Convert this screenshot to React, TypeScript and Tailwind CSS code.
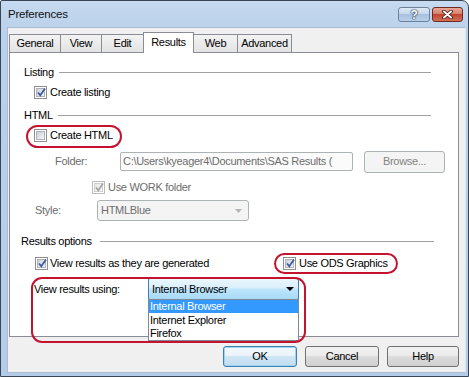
import React from "react";

function Check({ checked, disabled }: { checked?: boolean; disabled?: boolean }) {
  return (
    <span
      className={
        "w-[13px] h-[13px] shrink-0 border flex p-px bg-white " +
        (disabled ? "border-[#bcbcbc]" : "border-[#8e8f8f]")
      }
    >
      <span
        className={
          "flex-1 border relative " +
          (disabled
            ? "border-[#d0d0d0] bg-[linear-gradient(135deg,#e6e6e6,#fafafa)]"
            : "border-[#aeb3b9] bg-[linear-gradient(135deg,#cbcfd5,#f6f6f6)]")
        }
      >
        {checked && (
          <svg className="absolute left-[-1px] top-[-2px]" width="11" height="11" viewBox="0 0 11 11">
            <path
              d="M2 5.5 L4.3 8.3 L9 1.5"
              fill="none"
              stroke={disabled ? "#a3a3a3" : "#3b5aa0"}
              strokeWidth="1.7"
            />
          </svg>
        )}
      </span>
    </span>
  );
}

function Tab({ label, w, selected }: { label: string; w: number; selected?: boolean }) {
  return (
    <div
      style={{ width: w }}
      className={
        "-ml-px flex items-center justify-center border border-b-0 border-[#898c95] shrink-0 " +
        (selected
          ? "h-[21px] -mb-px bg-white relative z-10 pb-[2px]"
          : "h-[18px] bg-[linear-gradient(#f3f3f3,#e3e3e3)]")
      }
    >
      {label}
    </div>
  );
}

function Button({ label, w, def }: { label: string; w: number; def?: boolean }) {
  return (
    <div
      style={{ width: w }}
      className={
        "h-[21px] rounded-[3px] border flex items-center justify-center text-black " +
        (def
          ? "border-[#3c7fb1] bg-[linear-gradient(#f2f9fd_0%,#eaf3f9_45%,#cfe6f4_50%,#c1ddf0_100%)] shadow-[inset_0_0_0_1px_#9ed4ef]"
          : "border-[#707070] bg-[linear-gradient(#f2f2f2_0%,#ebebeb_45%,#dddddd_50%,#cfcfcf_100%)]")
      }
    >
      {label}
    </div>
  );
}

function GroupHeader({ label, pl, gap, pr }: { label: string; pl: number; gap: number; pr: number }) {
  return (
    <div className="h-[16px] flex items-center" style={{ paddingLeft: pl, paddingRight: pr }}>
      <span className="text-black">{label}</span>
      <div className="flex-1 h-px bg-[#a0a0a0]" style={{ marginLeft: gap }} />
    </div>
  );
}

export default function App() {
  return (
    <div className="w-[469px] h-[377px] relative overflow-hidden bg-white font-['Liberation_Sans',Arial,sans-serif] text-[11px] tracking-[-0.3px] text-black">
      <div className="w-full h-full border border-[#3a4656] rounded-tr-[7px] rounded-tl-[2px] bg-[linear-gradient(#c6daf0,#b9d1ea_30px,#b4cce7)] flex flex-col">
        {/* title bar */}
        <div className="h-[26px] flex items-center pl-[7px] pr-[5px] shrink-0">
          <span className="text-[11.5px] text-[#111] tracking-[-0.2px] pt-[1px]">Preferences</span>
          <div className="flex-1" />
          <div className="flex items-start gap-[2px] self-start mt-[6px]">
            <div className="w-[32px] h-[15px] rounded-[3px] border border-[#6d819b] bg-[linear-gradient(#dfe9f5_0%,#c6d7ec_45%,#a9c1e0_50%,#b9d0ea_100%)] flex items-center justify-center">
              <span className="text-[12px] font-bold text-white leading-none [text-shadow:0_0_1px_#263548,0_0_1px_#263548,0_0_2px_#263548]">
                ?
              </span>
            </div>
            <div className="w-[31px] h-[15px] rounded-[3px] border border-[#6e2a23] bg-[linear-gradient(#e8a898_0%,#d7806d_45%,#c2462f_50%,#d0705a_100%)] flex items-center justify-center">
              <svg width="13" height="9" viewBox="0 0 13 9">
                <path d="M3 1.5 L10 7.5 M10 1.5 L3 7.5" stroke="#3c1410" strokeWidth="3.6" strokeLinecap="round" />
                <path d="M3 1.5 L10 7.5 M10 1.5 L3 7.5" stroke="#ffffff" strokeWidth="2" strokeLinecap="round" />
              </svg>
            </div>
          </div>
        </div>

        {/* client area */}
        <div className="ml-[6px] mr-[2px] h-[346px] bg-[#f0f0f0] border border-[#a9bcd3] border-r-[#dce7f3] flex flex-col pl-[1px] pr-[6px] pt-[4px]">
          {/* tabs */}
          <div className="h-[20px] flex items-end pl-[1px]">
            <Tab label="General" w={52} />
            <Tab label="View" w={42} />
            <Tab label="Edit" w={43} />
            <Tab label="Results" w={51} selected />
            <Tab label="Web" w={45} />
            <Tab label="Advanced" w={55} />
          </div>

          {/* panel */}
          <div className="h-[285px] border border-[#898c95] bg-white flex flex-col">
            <div className="h-[11px]" />
            <GroupHeader label="Listing" pl={14} gap={5} pr={27} />
            <div className="h-[5px]" />
            <div className="h-[15px] flex items-center pl-[24px]">
              <Check checked />
              <span className="ml-[3px]">Create listing</span>
            </div>
            <div className="h-[7px]" />
            <GroupHeader label="HTML" pl={14} gap={5} pr={27} />
            <div className="h-[5px]" />
            <div className="h-[15px] flex items-center pl-[24px]">
              <Check />
              <span className="ml-[3px]">Create HTML</span>
            </div>
            <div className="h-[8px]" />
            <div className="h-[21px] flex items-center pl-[45px]">
              <span className="w-[65px] text-[#6d6d6d]">Folder:</span>
              <div className="w-[233px] h-[19px] border border-[#adb2b5] rounded-[2px] bg-[#fbfbfb] flex items-center pl-[2px] text-[#6d6d6d] whitespace-nowrap overflow-hidden">
                C:\Users\kyeager4\Documents\SAS Results (
              </div>
              <div className="ml-[11px] w-[81px] h-[22px] border border-[#adb2b5] rounded-[3px] bg-[#f4f4f4] flex items-center justify-center text-[#838383]">
                Browse...
              </div>
            </div>
            <div className="h-[8px]" />
            <div className="h-[15px] flex items-center pl-[82px]">
              <Check checked disabled />
              <span className="ml-[3px] text-[#6d6d6d]">Use WORK folder</span>
            </div>
            <div className="h-[5px]" />
            <div className="h-[21px] flex items-center pl-[25px]">
              <span className="w-[62px] text-[#6d6d6d]">Style:</span>
              <div className="w-[152px] h-[21px] border border-[#adb2b5] rounded-[3px] bg-[#f4f4f4] flex items-center pl-[3px] pr-[6px] text-[#6d6d6d]">
                <span className="flex-1">HTMLBlue</span>
                <svg width="7" height="4" viewBox="0 0 7 4">
                  <path d="M0 0 H7 L3.5 4 Z" fill="#b5b5b5" />
                </svg>
              </div>
            </div>
            <div className="h-[12px]" />
            <GroupHeader label="Results options" pl={11} gap={8} pr={24} />
            <div className="h-[7px]" />
            <div className="h-[15px] flex items-center pl-[25px]">
              <div className="w-[248px] flex items-center">
                <Check checked />
                <span className="ml-[2px]">View results as they are generated</span>
              </div>
              <Check checked />
              <span className="ml-[3px]">Use ODS Graphics</span>
            </div>
            <div className="h-[7px]" />
            <div className="h-[22px] flex items-center pl-[24px]">
              <span className="w-[114px]">View results using:</span>
              <div className="relative w-[151px] h-[22px]">
                <div className="w-full h-full border border-[#3c7fb1] rounded-[2px] bg-[linear-gradient(#eaf6fd_0%,#d9f0fc_45%,#bee6fd_50%,#a7d9f5_100%)] flex items-center pl-[3px] pr-[4px]">
                  <span className="flex-1">Internal Browser</span>
                  <svg width="8" height="4" viewBox="0 0 8 4">
                    <path d="M0 0 H8 L4 4 Z" fill="#000" />
                  </svg>
                </div>
                <div className="absolute left-0 top-[21px] w-[151px] h-[42px] bg-white border border-[#7f8a96] z-20 flex flex-col">
                  <div className="h-[13px] bg-[#3399ff] text-white flex items-center pl-[1px]">Internal Browser</div>
                  <div className="h-[14px] flex items-center pl-[1px]">Internet Explorer</div>
                  <div className="h-[13px] flex items-center pl-[1px]">Firefox</div>
                </div>
              </div>
            </div>
          </div>

          {/* buttons */}
          <div className="mt-[9px] flex justify-end gap-[8px]">
            <Button label="OK" w={74} def />
            <Button label="Cancel" w={74} />
            <Button label="Help" w={72} />
          </div>
        </div>
      </div>

      {/* red annotation marks */}
      <div className="absolute left-[26px] top-[125px] w-[96px] h-[23px] rounded-full border-2 border-[#c4122f] pointer-events-none z-30" />
      <div className="absolute left-[274px] top-[253px] w-[124px] h-[21px] rounded-full border-2 border-[#c4122f] pointer-events-none z-30" />
      <div className="absolute left-[31px] top-[277px] w-[275px] h-[66px] rounded-[11px] border-2 border-[#c4122f] pointer-events-none z-30" />
    </div>
  );
}
